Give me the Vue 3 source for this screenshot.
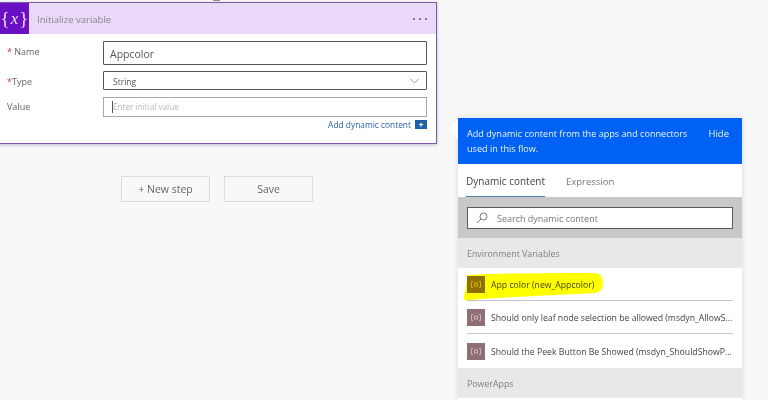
<script setup>
const envVars = [
  { text: 'App color (new_Appcolor)' },
  { text: 'Should only leaf node selection be allowed (msdyn_AllowS...' },
  { text: 'Should the Peek Button Be Showed (msdyn_ShouldShowP...' }
]
</script>

<template>
  <div class="page">
    <span class="connector"></span>
    <div class="left">
      <section class="card">
        <header class="card-head">
          <div class="card-icon"><span class="brace">{</span><i>x</i><span class="brace">}</span></div>
          <div class="card-title">Initialize variable</div>
          <div class="dots"><b></b><b></b><b></b></div>
        </header>
        <div class="card-body">
          <div class="row">
            <label><span class="req">*</span> Name</label>
            <div class="input strong name">Appcolor</div>
          </div>
          <div class="row row-type">
            <label><span class="req">*</span>Type</label>
            <div class="input strong type">
              <span>String</span>
              <svg width="9" height="6" viewBox="0 0 9 6"><path d="M.5 1l4 4 4-4" fill="none" stroke="#9a9a9a" stroke-width="1"/></svg>
            </div>
          </div>
          <div class="row row-value">
            <label>Value</label>
            <div class="input value"><span class="caret"></span><span class="ph">Enter initial value</span></div>
          </div>
          <div class="add-dyn">
            <span>Add dynamic content</span>
            <span class="plus">+</span>
          </div>
        </div>
      </section>
      <div class="actions">
        <button class="btn">+ New step</button>
        <button class="btn">Save</button>
      </div>
    </div>

    <aside class="panel">
      <span class="pointer"></span>
      <div class="banner">
        <p>Add dynamic content from the apps and connectors used in this flow.</p>
        <span class="hide">Hide</span>
      </div>
      <nav class="tabs">
        <span class="tab active">Dynamic content</span>
        <span class="tab expr">Expression</span>
      </nav>
      <div class="search-wrap">
        <div class="search">
          <svg width="12" height="12" viewBox="0 0 12 12"><circle cx="7.5" cy="4.5" r="3.5" fill="none" stroke="#777" stroke-width="1"/><path d="M5 7L1 11" stroke="#777" stroke-width="1"/></svg>
          <span>Search dynamic content</span>
        </div>
      </div>
      <div class="group">Environment Variables</div>
      <ul class="items">
        <li v-for="v in envVars" :key="v.text">
          <span class="tile">
            <svg width="10" height="7" viewBox="0 0 10 7"><path d="M2 .5H.5v6H2M8 .5h1.500v6H8" fill="none" stroke="#c9b4b6"/><rect x="3.500" y="2" width="3" height="3" fill="none" stroke="#c9b4b6"/></svg>
          </span>
          <span class="item-text">{{ v.text }}</span>
        </li>
      </ul>
      <svg class="marker" width="140" height="30" viewBox="0 0 140 30">
        <path d="M5 3C40 1 100 1 132 1c6 1 8 4 8 10 0 6-2 9-8 10C100 23 40 25 6 28c-5 1-6-1-5-4 2-6 2-14 4-21z" fill="#ffff00"/>
      </svg>
      <div class="group">PowerApps</div>
    </aside>
  </div>
</template>

<style scoped>
.page {
  position: relative;
  width: 768px;
  height: 400px;
  overflow: hidden;
  background: #f8f8f8;
  display: flex;
  font-family: "Open Sans", "Noto Sans", sans-serif;
  color: #3b3a39;
}
.connector {
  position: absolute;
  left: 213px;
  top: 0;
  width: 7px;
  height: 1px;
  background: #8a8a8a;
}
.left {
  width: 458px;
  flex: none;
  padding-top: 2px;
}
.card {
  width: 438px;
  margin-left: -1px;
  height: 142px;
  box-sizing: border-box;
  border: 1px solid #7d57a8;
  background: #fff;
  box-shadow: 0 1px 3px rgba(90, 60, 130, .35);
}
.card-head {
  height: 31px;
  background: #ead8f8;
  display: flex;
  align-items: center;
}
.card-icon {
  width: 29px;
  height: 31px;
  background: #6a0fc2;
  color: #e9dcf7;
  font-family: "Liberation Serif", serif;
  font-size: 19px;
  display: flex;
  align-items: center;
  justify-content: center;
  gap: 1px;
}
.card-icon i { font-size: 17px; }
.card-title {
  margin-left: 8px;
  padding-top: 1px;
  flex: 1;
  font-size: 9.5px;
  color: #8a8294;
}
.dots {
  display: flex;
  gap: 4px;
  margin-right: 9px;
}
.dots b {
  width: 2px;
  height: 2px;
  background: #5d5868;
  border-radius: 50%;
}
.card-body {
  padding: 7px 9px 0 7px;
  font-size: 9.5px;
}
.row {
  display: grid;
  grid-template-columns: 96px 1fr;
  align-items: start;
}
.row label { color: #666; font-size: 9px; margin-top: 4px; }
.row-value label { margin-top: 3px; }
.req { color: #c33; }
.row-type { margin-top: 6px; }
.row-value { margin-top: 7px; }
.input {
  box-sizing: border-box;
  border: 1px solid #a8a8a8;
  background: #fff;
  display: flex;
  align-items: center;
}
.strong { border-color: #555; border-radius: 1px; }
.name { height: 24px; padding: 1px 0 0 6px; font-size: 10.5px; color: #555; }
.type {
  height: 19px;
  padding: 1px 7px 0 9px;
  justify-content: space-between;
  font-size: 8.5px;
  color: #555;
}
.value { height: 20px; padding: 0 0 1px 8px; }
.caret { width: 1px; height: 12px; background: #555; }
.ph { color: #b8b8b8; font-size: 8.2px; }
.add-dyn {
  margin-top: 2px;
  display: flex;
  justify-content: flex-end;
  align-items: center;
  gap: 4px;
  color: #2b62a8;
  font-size: 8.4px;
}
.plus {
  width: 12px;
  height: 9px;
  background: #1f5fa8;
  color: #fff;
  font-size: 9px;
  line-height: 9px;
  text-align: center;
  font-weight: 700;
}
.actions {
  display: flex;
  gap: 14px;
  margin: 32px 0 0 121px;
}
.btn {
  width: 89px;
  height: 26px;
  padding: 0;
  border: 1px solid #dcdcdc;
  background: #f8f8f8;
  font: inherit;
  font-size: 10.5px;
  color: #666;
}
.panel {
  position: relative;
  flex: none;
  width: 284px;
  margin-top: 118px;
  background: #fff;
  box-shadow: 0 0 6px rgba(0, 0, 0, .12);
  align-self: stretch;
}
.pointer {
  position: absolute;
  left: -7px;
  top: 4px;
  width: 14px;
  height: 14px;
  background: #fff;
  transform: rotate(45deg);
}
.banner {
  position: relative;
  height: 46px;
  box-sizing: border-box;
  background: #0062f5;
  color: #e9f1ff;
  padding: 9px 10px 0 9px;
  display: flex;
  justify-content: space-between;
  font-size: 9.1px;
  line-height: 14.5px;
}
.banner p { margin: 0; width: 232px; }
.hide { margin: 0 3px 0 0; font-size: 9.5px; }
.tabs {
  height: 33px;
  display: flex;
  gap: 21px;
  padding-left: 8px;
  box-sizing: border-box;
  font-size: 10px;
}
.tab { line-height: 35px; color: #777; }
.tab.expr { font-size: 9.5px; }
.tab.active { color: #444; border-bottom: 1px solid #4b86b4; height: 32px; }
.search-wrap {
  height: 41px;
  box-sizing: border-box;
  background: #c8c8c8;
  padding: 10px 9px 0;
}
.search {
  height: 22px;
  box-sizing: border-box;
  border: 1px solid #5a5a5a;
  background: #fff;
  display: flex;
  align-items: center;
  gap: 9px;
  padding-left: 8px;
  font-size: 9px;
  color: #777;
}
.group {
  height: 30px;
  line-height: 33px;
  overflow: hidden;
  background: #e8e8e8;
  padding-left: 9px;
  font-size: 8.8px;
  color: #7f7f7f;
}
.items { list-style: none; margin: 0; padding: 0 9px; height: 100px; }
.items li {
  height: 33px;
  display: flex;
  align-items: center;
  gap: 6px;
  border-bottom: 1px solid #c4c4c4;
  box-sizing: border-box;
  font-size: 8.7px;
  color: #444;
  white-space: nowrap;
}
.items li:last-child { border-bottom: 0; height: 34px; }
.item-text { padding-top: 2px; }
.tile {
  width: 18px;
  height: 17px;
  margin-top: 1px;
  flex: none;
  background: #8e6f73;
  display: flex;
  align-items: center;
  justify-content: center;
}
.marker {
  position: absolute;
  left: 5px;
  top: 154px;
  mix-blend-mode: multiply;
}
</style>
